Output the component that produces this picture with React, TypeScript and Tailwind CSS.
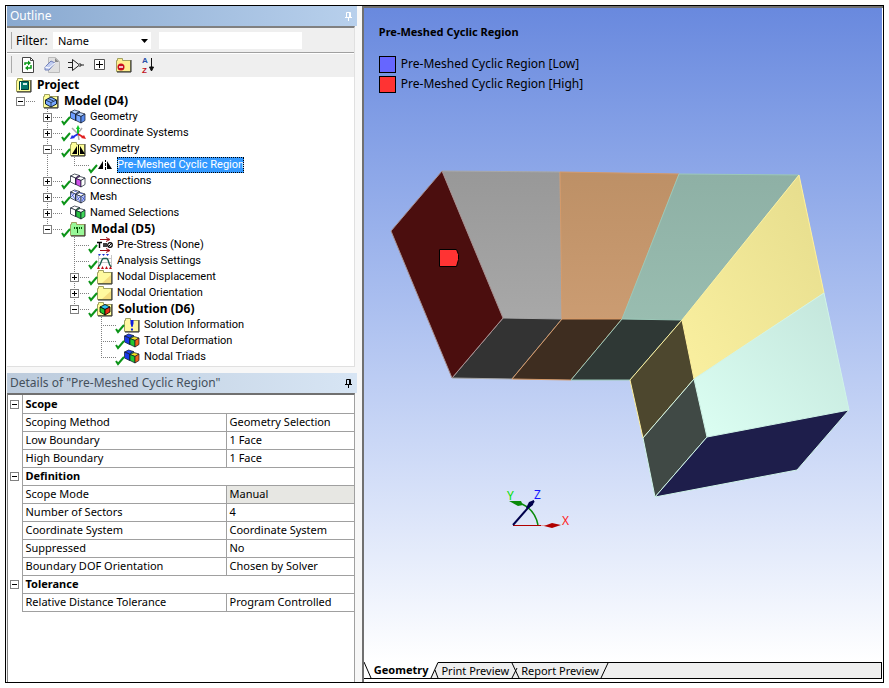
import { useState } from 'react';
import type { ReactNode } from 'react';

type IconName =
  | 'project' | 'model' | 'geometry' | 'axes' | 'symmetryFolder' | 'symmetry'
  | 'connections' | 'mesh' | 'named' | 'modal' | 'prestress' | 'settings'
  | 'folder' | 'solution' | 'info' | 'result';

interface TreeNode {
  label: string;
  icon: IconName;
  bold?: boolean;
  checked?: boolean;
  collapsed?: boolean;
  children?: TreeNode[];
}

const model: TreeNode = {
  label: 'Model (D4)',
  icon: 'model',
  bold: true,
  children: [
    { label: 'Geometry', icon: 'geometry', checked: true, collapsed: true },
    { label: 'Coordinate Systems', icon: 'axes', checked: true, collapsed: true },
    {
      label: 'Symmetry',
      icon: 'symmetryFolder',
      checked: true,
      children: [{ label: 'Pre-Meshed Cyclic Region', icon: 'symmetry', checked: true }],
    },
    { label: 'Connections', icon: 'connections', checked: true, collapsed: true },
    { label: 'Mesh', icon: 'mesh', checked: true, collapsed: true },
    { label: 'Named Selections', icon: 'named', collapsed: true },
    {
      label: 'Modal (D5)',
      icon: 'modal',
      bold: true,
      checked: true,
      children: [
        { label: 'Pre-Stress (None)', icon: 'prestress', checked: true },
        { label: 'Analysis Settings', icon: 'settings', checked: true },
        { label: 'Nodal Displacement', icon: 'folder', checked: true, collapsed: true },
        { label: 'Nodal Orientation', icon: 'folder', checked: true, collapsed: true },
        {
          label: 'Solution (D6)',
          icon: 'solution',
          bold: true,
          checked: true,
          children: [
            { label: 'Solution Information', icon: 'info', checked: true },
            { label: 'Total Deformation', icon: 'result', checked: true },
            { label: 'Nodal Triads', icon: 'result', checked: true },
          ],
        },
      ],
    },
  ],
};

const details = [
  {
    title: 'Scope',
    rows: [
      ['Scoping Method', 'Geometry Selection'],
      ['Low Boundary', '1 Face'],
      ['High Boundary', '1 Face'],
    ],
  },
  {
    title: 'Definition',
    rows: [
      ['Scope Mode', 'Manual'],
      ['Number of Sectors', '4'],
      ['Coordinate System', 'Coordinate System'],
      ['Suppressed', 'No'],
      ['Boundary DOF Orientation', 'Chosen by Solver'],
    ],
  },
  {
    title: 'Tolerance',
    rows: [['Relative Distance Tolerance', 'Program Controlled']],
  },
];

function Folder({ fill = '#ffff99', children }: { fill?: string; children?: ReactNode }) {
  return (
    <>
      <path d="M.5 3.5h1v-2h5v2h8v11H.5z" fill={fill} stroke="#a0a060" />
      <path d="M15 3v12H1" fill="none" stroke="#222" />
      {children}
    </>
  );
}

function Cube({ x, y, top, left, right }: { x: number; y: number; top: string; left: string; right: string }) {
  return (
    <g transform={`translate(${x} ${y})`} stroke="#101828" strokeWidth=".7" strokeLinejoin="round">
      <path d="M0 2.5 4 .5l5 1.500L5 4.500z" fill={top} />
      <path d="M0 2.500 5 4.500V11L0 8.500z" fill={left} />
      <path d="M5 4.500 9 2v6.500L5 11z" fill={right} />
    </g>
  );
}

function TreeIcon({ name }: { name: IconName }) {
  const art: Record<IconName, ReactNode> = {
    project: (
      <Folder>
        <path d="M3.500 4.500h9v8h-9z" fill="#08786b" stroke="#003c38" />
        <path d="M4 5h1v8H4z" fill="#fff" />
        <path d="M7 6h4v2H7z" fill="#d8f0e8" />
      </Folder>
    ),
    model: (
      <Folder>
        <path d="m2.500 7 5.500-3 5.500 3v4L8 14l-5.500-3z" fill="#78a8ff" stroke="#123" />
        <path d="M2.500 7 8 9.500 13.500 7M8 9.500V14M5 5.500 10.500 8" fill="none" stroke="#123" strokeWidth=".8" />
      </Folder>
    ),
    geometry: (
      <>
        <Cube x={0.5} y={0.5} top="#b8d4ff" left="#6c9cff" right="#5a8cf0" />
        <Cube x={6} y={3} top="#b8d4ff" left="#78a8ff" right="#5a8cf0" />
      </>
    ),
    axes: (
      <>
        <path d="m2 3 5 5m5-5L9 7M8 9l1 6" stroke="#aaa" strokeWidth="1.500" />
        <path d="M8 9V3" stroke="#12c828" strokeWidth="2" />
        <path d="M6 4 8 0l2 4z" fill="#12c828" />
        <path d="m8 9-5 3" stroke="#2030e8" strokeWidth="2" />
        <path d="m0 14 2-4 3 3z" fill="#2030e8" />
        <path d="m8 9 5 3" stroke="#e02020" strokeWidth="2" />
        <path d="m16 14-5-1 3-3z" fill="#e02020" />
      </>
    ),
    symmetryFolder: (
      <Folder>
        <path d="M7 5v8H2zM10 5v8h5z" fill="#000" />
        <path d="M8.500 4v10" stroke="#000" />
      </Folder>
    ),
    symmetry: (
      <>
        <path d="M6 4v8H1zM10 4v8h5z" fill="#000" />
        <path d="M8.500 3v2m0 1v3m0 1v3" stroke="#000" />
      </>
    ),
    connections: (
      <>
        <Cube x={0.5} y={0.5} top="#fff" left="#fff" right="#d050e8" />
        <Cube x={6} y={3} top="#fff" left="#d050e8" right="#fff" />
      </>
    ),
    mesh: (
      <>
        <Cube x={0.5} y={0.5} top="#fff" left="#dce4ff" right="#c0ccff" />
        <Cube x={6} y={3} top="#fff" left="#dce4ff" right="#c0ccff" />
        <path d="m1 4 4 6m-4-2 4-4m2 3 3 6m-3-2 4-4m1 1 3 3m-3 1 3-5M4 2l3 1m3 1 3 1" stroke="#3048c8" strokeWidth=".7" />
      </>
    ),
    named: (
      <>
        <Cube x={0.5} y={0.5} top="#fff" left="#fff" right="#48d858" />
        <Cube x={6} y={3} top="#fff" left="#28c040" right="#40d858" />
      </>
    ),
    modal: (
      <Folder fill="#98f898">
        <path d="M7.500 6v6M4.500 6v2m2-2v2m3-2v2m2-2v2" stroke="#085808" />
      </Folder>
    ),
    prestress: (
      <>
        <path d="M3 2.500h9m-3-2 4 2-4 2M3 13.500h9m-3-2 4 2-4 2" fill="none" stroke="#a01018" />
        <path d="M0 5.500h5M2.500 5v6M6 7h4M6 9h4" stroke="#000" strokeWidth="1.400" />
        <circle cx="13" cy="8" r="2.300" fill="none" stroke="#000" strokeWidth="1.200" />
        <path d="m11 10 4-4" stroke="#000" />
      </>
    ),
    settings: (
      <>
        <path d="M1.500 2v12m13-12v12M2 5.500h12M2 9.500h12" stroke="#c8c8c8" />
        <path d="M1 1h3L2.500 3zm4 0h3L6.500 3zm4 0h3l-1.500 2z" fill="#1830d0" />
        <path d="M1 13.500c3 0 3-8 5.500-8h3c2.500 0 2 8 5 8" fill="none" stroke="#186050" strokeWidth="1.300" />
        <path d="m0 16 1.500-3L3 16zm4 0 1.500-3L7 16zm4 0 1.500-3 1.500 3zm4 0 1.500-3 1.500 3z" fill="#c01018" />
      </>
    ),
    folder: (
      <Folder fill="#fffaa0">
        <path d="M14 6v8H5z" fill="#f0d070" opacity=".7" />
      </Folder>
    ),
    solution: (
      <Folder>
        <path d="m3 6 5-2.500L13 6 8 8.500z" fill="#30c0f0" stroke="#000" strokeWidth=".8" />
        <path d="m3 6 5 2.500V14l-5-3z" fill="#20c830" stroke="#000" strokeWidth=".8" />
        <path d="M8 8.500 13 6v5l-5 3z" fill="#e83018" stroke="#000" strokeWidth=".8" />
      </Folder>
    ),
    info: (
      <Folder fill="#fff7a0">
        <path d="M6.500 3h3v3.500L8.500 10h-1L6.500 6.500zM7 11.500h2v2H7z" fill="#1020e0" />
      </Folder>
    ),
    result: (
      <>
        <Cube x={0.5} y={0.5} top="#2040f0" left="#1838e8" right="#10b0e8" />
        <Cube x={6} y={3} top="#f0e020" left="#20c830" right="#f06018" />
      </>
    ),
  };
  return (
    <svg width="17" height="16" viewBox="0 0 17 16" className="mr-[3px] shrink-0" aria-hidden="true">
      {art[name]}
    </svg>
  );
}

// One indent step of the tree: dotted guide lines, plus the status tick at its right edge
function Guide({ kind, checked, children }: { kind: 'blank' | 'line' | 'tee' | 'end' | 'stub'; checked?: boolean; children?: ReactNode }) {
  const joined = kind !== 'blank' && kind !== 'line';
  return (
    <span className="relative flex h-4 w-[27px] shrink-0 items-center">
      <svg width="28" height="16" className="absolute top-0 left-0 z-10 overflow-visible" aria-hidden="true">
        <g stroke="#808080" strokeDasharray="1 1" fill="none">
          {(kind === 'line' || kind === 'tee') && <path d="M4.500 0v16" />}
          {kind === 'end' && <path d="M4.500 0v8" />}
          {joined && <path d={children ? 'M10 8.500h9' : 'M4 8.500h15'} />}
        </g>
        {checked && <path d="m19 12 2 3 6-7" fill="none" stroke="#0c9418" strokeWidth="2" />}
      </svg>
      {children}
    </span>
  );
}

function Toggle({ open, label, onClick }: { open: boolean; label: string; onClick: () => void }) {
  return (
    <button
      type="button"
      aria-label={`Toggle ${label}`}
      aria-expanded={open}
      onClick={onClick}
      className="relative z-20 flex size-[9px] shrink-0 items-center justify-center border border-[#808080] bg-white"
    >
      <svg width="5" height="5" viewBox="0 0 5 5" aria-hidden="true">
        <path d={open ? 'M0 2.500h5' : 'M0 2.500h5M2.500 0v5'} stroke="#000" />
      </svg>
    </button>
  );
}

interface TreeItemProps {
  node: TreeNode;
  lines: boolean[];
  last: boolean;
  selected: string;
  onSelect: (label: string) => void;
}

function TreeItem({ node, lines, last, selected, onSelect }: TreeItemProps) {
  const [open, setOpen] = useState(!node.collapsed);
  const expandable = node.collapsed !== undefined || !!node.children;
  const root = node === model;

  return (
    <li>
      <div className="flex h-4 items-center">
        {lines.map((on, i) => (
          <Guide key={i} kind={on ? 'line' : 'blank'} />
        ))}
        <Guide kind={root ? 'stub' : last ? 'end' : 'tee'} checked={node.checked}>
          {expandable && <Toggle open={open} label={node.label} onClick={() => setOpen(!open)} />}
        </Guide>
        <TreeIcon name={node.icon} />
        <button
          type="button"
          onClick={() => onSelect(node.label)}
          className={`h-4 whitespace-nowrap leading-4 ${node.bold ? 'px-px text-[12px] font-bold' : "font-['Roboto',sans-serif]"} ${
            selected === node.label ? 'bg-[#3399ff] text-white outline-1 -outline-offset-1 outline-dotted outline-black' : ''
          }`}
        >
          {node.label}
        </button>
      </div>
      {open && node.children && (
        <ul>
          {node.children.map((child, i) => (
            <TreeItem
              key={child.label}
              node={child}
              lines={[...lines, !last]}
              last={i === node.children!.length - 1}
              selected={selected}
              onSelect={onSelect}
            />
          ))}
        </ul>
      )}
    </li>
  );
}

function Pin() {
  return (
    <svg width="7" height="9" viewBox="0 0 7 9" aria-hidden="true">
      <path d="M1.500 5V.5h4V5M4.500 1v4M0 5.500h7M3.500 6v3" fill="none" stroke="currentColor" />
    </svg>
  );
}

const tools: { label: string; art: ReactNode }[] = [
  {
    label: 'Refresh',
    art: (
      <>
        <path d="M2.500.5h8l3 3v12h-11z" fill="#fff" stroke="#444" />
        <path d="M10.500.5v3h3" fill="none" stroke="#444" />
        <path d="M5 8V6h4m2 2v3H7" fill="none" stroke="#0a9818" strokeWidth="1.500" />
        <path d="m8 3.500 3 2.500-3 2.500zM8 8.500 5 11l3 2.500z" fill="#0a9818" />
      </>
    ),
  },
  {
    label: 'Clear',
    art: (
      <>
        <path d="M4.500.5h7l4 4v11h-11z" fill="#e0e0e0" stroke="#bbb" />
        <path d="M11 1v4h4z" fill="#888" />
        <path d="m1 10 6-6 4 2-6 7H1z" fill="#c0ccf0" stroke="#7080b8" />
        <path d="m1 10 4 1 6-5" fill="none" stroke="#fff" />
      </>
    ),
  },
  {
    label: 'Connections',
    art: <path d="M4.500 2.500v11l7-5.500zM0 5.500h4M0 10.500h4m9-2.500h3m-4.500-1.500a1.500 1.500 0 1 1 0 3" fill="none" stroke="#222" />,
  },
  {
    label: 'Expand all',
    art: (
      <>
        <path d="M2.500 2.500h10v10h-10z" fill="#fff" stroke="#555" />
        <path d="M4 7.500h7M7.500 4v7" stroke="#000" />
      </>
    ),
  },
  {
    label: 'Hide folders',
    art: (
      <>
        <Folder fill="#ffef90" />
        <circle cx="5" cy="10" r="3.500" fill="#c81020" />
        <path d="M3 10h4" stroke="#fff" strokeWidth="1.500" />
      </>
    ),
  },
  {
    label: 'Sort',
    art: (
      <>
        <g fontFamily="Liberation Sans, sans-serif" fontSize="8" fontWeight="700">
          <text x="2" y="6" fill="#2850a8">A</text>
          <text x="2" y="16" fill="#c01020">Z</text>
        </g>
        <path d="M11.500 1v12m-2-3 2 4 2-4z" fill="#111" stroke="#111" />
      </>
    ),
  },
];

function Outline() {
  const [selected, setSelected] = useState('Pre-Meshed Cyclic Region');

  return (
    <section>
      <header className="flex h-5 items-center justify-between bg-linear-to-r from-[#89a9d0] to-[#b8d0ec] pr-[5px] pl-[3px] text-[12px] text-white">
        <h2>Outline</h2>
        <button type="button" aria-label="Pin outline"><Pin /></button>
      </header>
      <div className="mr-0.5 border-t-2 border-r border-t-[#808080] border-r-[#e0e0e0]">
        <div className="flex h-[25px] items-center border-b border-[#a0a0a0] bg-[#efefef] pt-px pl-1">
          <span className="mr-1 h-[17px] w-px bg-[#aaa]" />
          <label htmlFor="filter" className="w-[37px] text-[12px]">Filter:</label>
          <div className="relative">
            <select id="filter" className="h-[17px] w-[98px] appearance-none bg-white pl-[5px] leading-[17px]">
              <option>Name</option>
            </select>
            <svg width="7" height="4" viewBox="0 0 7 4" className="pointer-events-none absolute top-[7px] right-[3px]" aria-hidden="true">
              <path d="M0 0h7L3.500 4z" />
            </svg>
          </div>
          <input aria-label="Filter text" className="ml-2 h-[17px] w-[143px] bg-white px-1" />
        </div>
        <div className="flex h-6 items-center gap-2 border-t border-white bg-[#efefef] pb-0.5 pl-1">
          <span className="h-[17px] w-px bg-[#aaa]" />
          {tools.map((tool) => (
            <button key={tool.label} type="button" aria-label={tool.label}>
              <svg width="16" height="16" viewBox="0 0 16 16" className="overflow-visible">{tool.art}</svg>
            </button>
          ))}
        </div>
        <div className="h-[290px] overflow-hidden border-b border-[#e0e0e0] bg-white pl-[9px]">
          <div className="flex h-4 items-center text-[12px] font-bold">
            <TreeIcon name="project" />
            <span className="pl-px">Project</span>
          </div>
          <ul>
            <TreeItem node={model} lines={[]} last selected={selected} onSelect={setSelected} />
          </ul>
        </div>
      </div>
    </section>
  );
}

function Details() {
  const [closed, setClosed] = useState<string[]>([]);

  const toggle = (title: string) => {
    setClosed(closed.includes(title) ? closed.filter((t) => t !== title) : [...closed, title]);
  };

  return (
    <section className="mt-[6px] flex flex-1 flex-col">
      <header className="flex h-5 items-center justify-between bg-linear-to-r from-[#bccbdc] to-[#d7e5f4] pr-[5px] pl-[3px] text-[12px] text-[#44505c]">
        <h2>Details of "Pre-Meshed Cyclic Region"</h2>
        <button type="button" aria-label="Pin details" className="text-black"><Pin /></button>
      </header>
      <div className="mr-0.5 flex-1 border-t-2 border-r border-l border-t-[#707070] border-r-[#a0a0a0] border-l-[#808080] bg-white">
        <table className="w-full table-fixed border-collapse">
          <colgroup>
            <col className="w-[14px]" />
            <col className="w-[204px]" />
            <col />
          </colgroup>
          {details.map((group) => (
            <tbody key={group.title}>
              <tr className="h-[18px]">
                <td className="border-r border-[#a0a0a0] pl-[2px]">
                  <Toggle open={!closed.includes(group.title)} label={group.title} onClick={() => toggle(group.title)} />
                </td>
                <th colSpan={2} className="border-b border-[#a0a0a0] pl-[3px] text-left leading-4">{group.title}</th>
              </tr>
              {!closed.includes(group.title) &&
                group.rows.map(([name, value]) => (
                  <tr key={name} className="h-[18px]">
                    <td className="border-r border-[#a0a0a0]" />
                    <td className="border-r border-b border-[#a0a0a0] pl-[3px] leading-4">{name}</td>
                    <td className={`border-b border-[#a0a0a0] pl-[3px] leading-4 ${value === 'Manual' ? 'bg-[#e7e7e3]' : ''}`}>{value}</td>
                  </tr>
                ))}
            </tbody>
          ))}
        </table>
      </div>
    </section>
  );
}

const faces = [
  { points: '442,171 560,172 562,319 503,318', fill: 'url(#gray)', edge: '#a8a8a8' },
  { points: '560,172 679,174 622,319 562,319', fill: 'url(#orange)', edge: '#d69a68' },
  { points: '679,174 799,175 682,320 622,319', fill: 'url(#teal)', edge: '#9cc8b8' },
  { points: '799,175 824,293 694,379 682,320', fill: 'url(#yellow)', edge: '#fff09c' },
  { points: '824,293 849,410 707,437 694,379', fill: 'url(#mint)', edge: '#d0f4e8' },
  { points: '503,318 562,319 512,379 452,378', fill: '#333333', edge: '#a8a8a8' },
  { points: '562,319 622,319 571,380 512,379', fill: '#3e2d20', edge: '#d69a68' },
  { points: '622,319 682,320 630,380 571,380', fill: '#2f3835', edge: '#9cc8b8' },
  { points: '682,320 694,379 643,438 630,380', fill: '#4d472e', edge: '#fff09c' },
  { points: '694,379 707,437 655,497 643,438', fill: '#404945', edge: '#d0f4e8' },
  { points: '707,437 849,410 797,470 655,497', fill: '#1e1e4b', edge: '#d0f4e8' },
  { points: '442,171 503,318 452,378 391,231', fill: '#4b0e0e', edge: '#a89090' },
];

const shades = [
  ['gray', '#989898', '#a8a8a8'],
  ['orange', '#bd9066', '#cb9c72'],
  ['teal', '#8eb0a5', '#99bdb0'],
  ['yellow', '#e5dc8c', '#faf0a0'],
  ['mint', '#c2e4da', '#dcfff3'],
];

function Scene() {
  return (
    <svg className="absolute inset-0 size-full" role="img" aria-label="Cyclic sector model">
      <defs>
        {shades.map(([id, from, to]) => (
          <linearGradient key={id} id={id} x1="1" y1="0" x2={id === 'yellow' || id === 'mint' ? '0' : '1'} y2="1">
            <stop stopColor={from} />
            <stop offset="1" stopColor={to} />
          </linearGradient>
        ))}
      </defs>
      <g transform="translate(-364 -8)">
        {faces.map((face) => (
          <polygon key={face.points} points={face.points} fill={face.fill} stroke={face.edge} />
        ))}
        <path d="M439.500 249.500h17l2 5v5l-2 7h-17z" fill="#ff3333" stroke="#000" />
        <path d="M513 525.500h28" stroke="#b00000" />
        <path d="M541 525.500h14" stroke="#e8a0a0" />
        <path d="m544 526 8-3 9 2-9 3z" fill="#b00000" />
        <path d="M538 525c-2-10-7-17-16-21" fill="none" stroke="#0a8a0a" strokeWidth="1.500" />
        <path d="m509 501 12 0 2 4-5 1z" fill="#0a8a0a" />
        <path d="m513 525 21-24" stroke="#00004c" strokeWidth="2" />
        <path d="m526 508 3-6 5-2-1 5-4 3z" fill="#00004c" />
        <g fontSize="12">
          <text x="507" y="500" fill="#00e000">Y</text>
          <text x="534" y="499" fill="#1414ff">Z</text>
          <text x="562" y="525" fill="#ff2020">X</text>
        </g>
      </g>
    </svg>
  );
}

function ViewTabs() {
  return (
    <nav className="flex h-[17px] border-b border-black bg-[#efefef]">
      <a href="#geometry" className="flex items-center bg-white font-bold leading-4">
        <svg width="8" height="16" aria-hidden="true"><path d="m0 0 7 16" stroke="#000" /></svg>
        <span className="px-0.5">Geometry</span>
      </a>
      <svg width="10" height="16" className="shrink-0" aria-hidden="true">
        <path d="M0 0h7L0 16z" fill="#fff" />
        <path d="M10 .5H8L1 16M5 8l3 8" fill="none" stroke="#000" />
      </svg>
      <a href="#print" className="flex items-center border-t border-black px-px leading-4">Print Preview</a>
      <svg width="10" height="16" className="shrink-0" aria-hidden="true">
        <path d="M0 .5h10M7 6 2 16M2 1l7 15" fill="none" stroke="#000" />
      </svg>
      <a href="#report" className="flex items-center border-t border-black px-px leading-4">Report Preview</a>
      <svg width="9" height="16" className="shrink-0" aria-hidden="true">
        <path d="M0 .5h9M8 1 1 16" fill="none" stroke="#000" />
      </svg>
      <span className="flex-1 border-t border-r border-black" />
    </nav>
  );
}

function Viewport() {
  return (
    <main className="flex min-w-0 flex-1 flex-col border-t-2 border-l-2 border-[#707070] bg-white pr-px pb-[3px]">
      <div className="relative flex-1 overflow-hidden bg-linear-to-b from-[#6989de] to-white">
        <Scene />
        <div className="relative px-[15px] pt-4 text-[12px] leading-4">
          <h1 className="text-[11px] leading-4 font-bold">Pre-Meshed Cyclic Region</h1>
          <ul className="mt-4 space-y-1">
            <li className="flex h-4 items-center gap-[5px]">
              <span className="size-[17px] shrink-0 border border-black bg-[#6666ff]" />
              Pre-Meshed Cyclic Region [Low]
            </li>
            <li className="flex h-4 items-center gap-[5px]">
              <span className="size-[17px] shrink-0 border border-black bg-[#ff3333]" />
              Pre-Meshed Cyclic Region [High]
            </li>
          </ul>
        </div>
      </div>
      <ViewTabs />
    </main>
  );
}

export default function App() {
  return (
    <div className="flex min-h-screen bg-white p-[5px] font-['Noto_Sans','Open_Sans',sans-serif] text-[11px] text-black">
      <div className="flex flex-1 border border-black bg-[#f7f7f7]">
        <aside className="mr-[5px] flex w-2/5 shrink-0 flex-col pl-px">
          <Outline />
          <Details />
        </aside>
        <Viewport />
      </div>
    </div>
  );
}
